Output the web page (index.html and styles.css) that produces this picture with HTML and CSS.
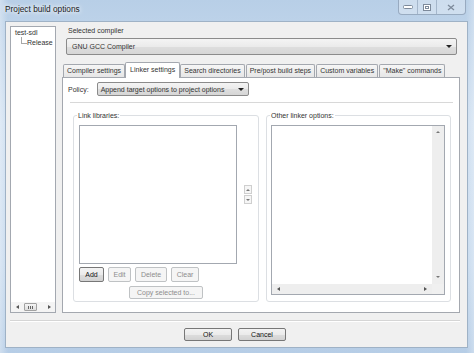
FILE: index.html
```html
<!DOCTYPE html>
<html lang="en">
<head>
  <meta charset="UTF-8" />
  <title>Project build options</title>
  <link rel="stylesheet" href="styles.css">
</head>
<body>
  <div class="window">
    <div class="titlebar">
      <span class="title">Project build options</span>
      <div class="caption">
        <span class="cap min"><svg width="10" height="4" viewBox="0 0 10 4"><rect x="0.5" y="0.5" width="9" height="3" rx="1" fill="#fff" stroke="#7d8a9b"/></svg></span>
        <span class="cap max"><svg width="8" height="7" viewBox="0 0 8 7"><rect x="0.5" y="0.5" width="7" height="6" fill="#fff" stroke="#7d8a9b"/><rect x="2.5" y="2.5" width="3" height="2" fill="none" stroke="#7d8a9b"/></svg></span>
        <span class="cap close"><svg width="8" height="7" viewBox="0 0 8 7"><path d="M1 1 L7 6 M7 1 L1 6" stroke="#7d8a9b" stroke-width="1.3"/></svg></span>
      </div>
    </div>

    <div class="client">
      <div class="top">
        <div class="tree">
          <div class="tree-items">
            <div class="tree-item root">test-sdl</div>
            <div class="tree-item child">Release</div>
          </div>
          <div class="hscroll">
            <span class="arrow left"></span>
            <span class="thumb"><svg width="5" height="3" viewBox="0 0 5 3"><path d="M0.5 0v3M2.5 0v3M4.5 0v3" stroke="#666" stroke-width="1"/></svg></span>
            <span class="arrow right"></span>
          </div>
        </div>

        <div class="main">
          <div class="field-label">Selected compiler</div>
          <div class="combo compiler">GNU GCC Compiler<span class="drop"></span></div>

          <div class="tabs">
            <span class="tab">Compiler settings</span>
            <span class="tab active">Linker settings</span>
            <span class="tab">Search directories</span>
            <span class="tab">Pre/post build steps</span>
            <span class="tab">Custom variables</span>
            <span class="tab">"Make" commands</span>
          </div>

          <div class="panel">
            <div class="policy">
              <span>Policy:</span>
              <div class="combo policy-combo">Append target options to project options<span class="drop"></span></div>
            </div>
            <div class="hline"></div>

            <div class="groups">
              <fieldset class="group libs">
                <legend>Link libraries:</legend>
                <div class="lib-row">
                  <div class="listbox"></div>
                  <div class="updown">
                    <span class="tiny"><span class="arrow up"></span></span>
                    <span class="tiny"><span class="arrow down"></span></span>
                  </div>
                </div>
                <div class="lib-buttons">
                  <button class="btn add">Add</button>
                  <button class="btn edit" disabled>Edit</button>
                  <button class="btn del" disabled>Delete</button>
                  <button class="btn clear" disabled>Clear</button>
                </div>
                <button class="btn copy" disabled>Copy selected to...</button>
              </fieldset>

              <fieldset class="group other">
                <legend>Other linker options:</legend>
                <div class="textbox">
                  <div class="text-area"></div>
                  <div class="vscroll">
                    <span class="arrow up"></span>
                    <span class="arrow down"></span>
                  </div>
                  <div class="hbar">
                    <span class="arrow left"></span>
                    <span class="arrow right"></span>
                  </div>
                  <div class="corner"></div>
                </div>
              </fieldset>
            </div>
          </div>
        </div>
      </div>

      <div class="footer">
        <button class="btn dialog">OK</button>
        <button class="btn dialog">Cancel</button>
      </div>
    </div>
  </div>
</body>
</html>
```

FILE: styles.css
```css
* {
  box-sizing: border-box;
}

body {
  margin: 0;
  font-family: "Liberation Sans", Arial, sans-serif;
  font-size: 7px;
  color: #333;
}

.window {
  width: 474px;
  height: 353px;
  display: flex;
  flex-direction: column;
  overflow: hidden;
  background:
    linear-gradient(to right, rgba(255,255,255,0.35), rgba(255,255,255,0) 8px, rgba(255,255,255,0) 466px, rgba(255,255,255,0.3)),
    linear-gradient(to bottom, #b8cfe7 0%, #d0e0f1 35%, #c7daee 75%, #b6cde6 100%);
}

/* title bar */
.titlebar {
  flex: none;
  height: 21px;
  display: flex;
  align-items: flex-start;
  padding-left: 5px;
}

.title {
  margin-top: 4px;
  font-size: 8.3px;
  line-height: 10px;
  color: #1c1c1c;
  text-shadow: 0 0 4px #fff, 0 0 6px #fff;
}

.caption {
  margin-left: auto;
  margin-right: 8px;
  height: 15px;
  display: flex;
  border: 1px solid rgba(70, 92, 122, 0.4);
  border-top: none;
  border-radius: 0 0 4px 4px;
  background: rgba(255, 255, 255, 0.3);
}

.cap {
  display: flex;
  align-items: center;
  justify-content: center;
  border-left: 1px solid rgba(70, 92, 122, 0.3);
}

.cap:first-child {
  border-left: none;
}

.cap.min { width: 18px; }
.cap.max { width: 19px; }
.cap.close { width: 29px; }

/* client area */
.client {
  flex: 1;
  margin: 0 6px 5px 5px;
  border: 1px solid #9fb2c6;
  background: #f0f0f0;
  padding: 4px 7px 0 4px;
  display: flex;
  flex-direction: column;
}

.top {
  display: flex;
  gap: 6px;
  height: 287px;
}

/* tree */
.tree {
  width: 46px;
  flex: none;
  border: 1px solid #a3a8b0;
  background: #fff;
  display: flex;
  flex-direction: column;
}

.tree-items {
  flex: 1;
  padding-top: 1px;
}

.tree-item {
  height: 10px;
  line-height: 10px;
  white-space: nowrap;
}

.tree-item.root {
  padding-left: 4px;
}

.tree-item.child {
  padding-left: 16px;
  position: relative;
}

.tree-item.child::before {
  content: "";
  position: absolute;
  left: 10px;
  top: -1px;
  width: 5px;
  height: 6px;
  border-left: 1px solid #a8a8a8;
  border-bottom: 1px solid #a8a8a8;
}

.hscroll {
  height: 10px;
  display: flex;
  align-items: center;
  padding: 0 4px 0 5px;
  background: #f4f4f4;
}

.thumb {
  width: 13px;
  height: 8px;
  margin-left: 5px;
  border: 1px solid #a2a2a2;
  border-radius: 1px;
  background: linear-gradient(#f5f5f5, #dedede);
  display: flex;
  align-items: center;
  justify-content: center;
}

.hscroll .arrow.right {
  margin-left: auto;
}

/* small triangles */
.arrow {
  width: 0;
  height: 0;
  display: block;
}

.arrow.left {
  border-right: 3px solid #555;
  border-top: 2px solid transparent;
  border-bottom: 2px solid transparent;
}

.arrow.right {
  border-left: 3px solid #555;
  border-top: 2px solid transparent;
  border-bottom: 2px solid transparent;
}

.arrow.up {
  border-bottom: 2px solid #777;
  border-left: 2px solid transparent;
  border-right: 2px solid transparent;
}

.arrow.down {
  border-top: 2px solid #777;
  border-left: 2px solid transparent;
  border-right: 2px solid transparent;
}

/* main column */
.main {
  flex: 1;
  min-width: 0;
  display: flex;
  flex-direction: column;
}

.field-label {
  margin-left: 6px;
  height: 9px;
  line-height: 9px;
}

.combo {
  display: flex;
  align-items: center;
  padding-left: 5px;
  border: 1px solid #8b8b8b;
  border-radius: 2px;
  background: linear-gradient(#f4f4f4 0%, #ebebeb 50%, #dedede 51%, #d6d6d6 100%);
  white-space: nowrap;
}

.combo.compiler {
  margin: 3px 3px 0 4px;
  height: 17px;
}

.drop {
  margin-left: auto;
  margin-right: 4px;
  border-top: 3px solid #222;
  border-left: 3px solid transparent;
  border-right: 3px solid transparent;
}

/* tabs */
.tabs {
  display: flex;
  align-items: flex-end;
  height: 15px;
  margin-top: 7px;
  padding-left: 1px;
  position: relative;
  z-index: 1;
}

.tab {
  height: 13px;
  line-height: 12px;
  padding: 0 3px;
  border: 1px solid #a4a8af;
  border-bottom: none;
  border-radius: 2px 2px 0 0;
  background: linear-gradient(#f6f6f6, #e6e6e6);
  white-space: nowrap;
}

.tab + .tab {
  margin-left: 1px;
}

.tab.active {
  height: 16px;
  line-height: 13px;
  margin: 0 -1px -1px 0;
  padding: 0 4px;
  background: #fff;
  position: relative;
  z-index: 2;
}

.panel {
  flex: 1;
  border: 1px solid #a4a8af;
  background: #fff;
}

.policy {
  display: flex;
  align-items: center;
  margin: 4px 0 0 5px;
  height: 14px;
}

.policy-combo {
  margin-left: 8px;
  width: 152px;
  height: 14px;
  padding-left: 3px;
}

.hline {
  margin: 6px 6px 0 7px;
  border-top: 1px solid #d8d8d8;
}

/* group boxes */
.groups {
  display: flex;
  gap: 7px;
  margin: 8px 8px 0 10px;
}

.group {
  margin: 0;
  padding: 0;
  min-width: 0;
  border: 1px solid #dcdfe3;
  border-radius: 3px;
}

.group legend {
  margin-left: 3px;
  padding: 0 1px;
  line-height: 9px;
}

.group.libs {
  width: 186px;
  flex: none;
  padding-bottom: 2px;
}

.group.other {
  flex: 1;
}

.lib-row {
  display: flex;
  align-items: center;
  margin: 5px 0 0 5px;
}

.listbox {
  width: 158px;
  height: 139px;
  border: 1px solid #a3a8b0;
  background: #fff;
}

.updown {
  margin-left: 7px;
  display: flex;
  flex-direction: column;
  gap: 1px;
}

.tiny {
  width: 8px;
  height: 9px;
  border: 1px solid #cfcfcf;
  background: #f6f6f6;
  display: flex;
  align-items: center;
  justify-content: center;
}

.lib-buttons {
  display: flex;
  gap: 4px;
  margin: 3px 0 0 5px;
}

.btn {
  font: inherit;
  color: #111;
  padding: 0;
  height: 15px;
  border: 1px solid #777;
  border-radius: 2px;
  background: linear-gradient(#f3f3f3 0%, #ebebeb 50%, #dddddd 51%, #d2d2d2 100%);
}

.btn:disabled {
  color: #8d8d8d;
  border-color: #bfc2c4;
  background: #f5f5f5;
}

.btn.add { width: 25px; }
.btn.edit { width: 23px; }
.btn.del { width: 32px; }
.btn.clear { width: 28px; }

.btn.copy {
  display: block;
  width: 74px;
  height: 13px;
  margin: 4px auto 0;
}

.textbox {
  margin: 5px 5px 6px 4px;
  height: 170px;
  border: 1px solid #a3a8b0;
  background: #fff;
  display: grid;
  grid-template-columns: 1fr 12px;
  grid-template-rows: 1fr 10px;
}

.vscroll {
  background: #eeeeee;
  display: flex;
  flex-direction: column;
  align-items: center;
  justify-content: space-between;
  padding: 5px 0 6px;
}

.hbar {
  background: #eeeeee;
  display: flex;
  align-items: center;
  justify-content: space-between;
  padding: 0 5px;
}

.corner {
  background: #f0f0f0;
}

/* dialog buttons */
.footer {
  margin-top: 7px;
  border-top: 1px solid #d5d5d5;
  box-shadow: inset 0 1px 0 #fff;
  padding-top: 7px;
  display: flex;
  justify-content: center;
  gap: 6px;
}

.btn.dialog {
  width: 48px;
  height: 13px;
}
```
